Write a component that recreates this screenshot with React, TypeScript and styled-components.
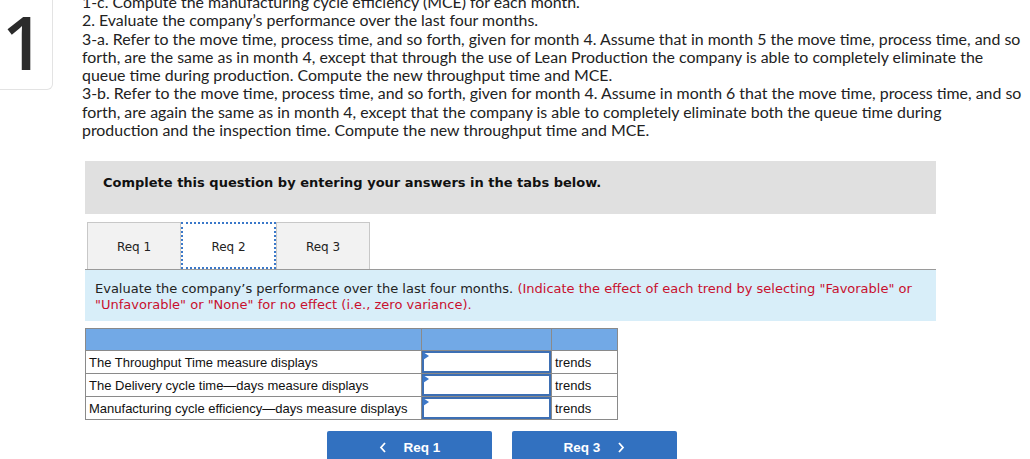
import React from "react";
import styled, { createGlobalStyle } from "styled-components";

const Global = createGlobalStyle`
  html, body { margin: 0; padding: 0; background: #fff; }
  body { overflow: hidden; }
`;

const Page = styled.div`
  display: flex;
  align-items: flex-start;
  width: 1030px;
  height: 459px;
  overflow: hidden;
`;

const NumberCard = styled.div`
  flex: 0 0 auto;
  width: 53px;
  height: 100px;
  margin-top: -10px;
  box-sizing: border-box;
  border: 1px solid #e3e3e3;
  border-left: none;
  border-radius: 0 6px 6px 0;
  display: flex;
  justify-content: flex-start;
  padding-left: 2px;
  padding-top: 14px;
  font-family: "Open Sans", sans-serif;
  font-weight: 600;
  font-size: 74px;
  line-height: 1;
  color: #2b2b2b;
  overflow: hidden;
`;

const Main = styled.div`
  flex: 1 1 auto;
  margin-left: 29px;
  display: flex;
  flex-direction: column;
`;

const Question = styled.div`
  margin-top: -7px;
  font-family: "Lato", sans-serif;
  font-size: 15.9px;
  line-height: 18.3px;
  color: #222;
  white-space: nowrap;
`;

const Line = styled.div``;

const Section = styled.div`
  margin-left: 3px;
  width: 851px;
  display: flex;
  flex-direction: column;
`;

const Instruction = styled.div`
  margin-top: 22px;
  height: 53px;
  background: #e0e0e0;
  padding: 14px 0 0 18px;
  font-family: "DejaVu Sans", Verdana, sans-serif;
  font-weight: bold;
  font-size: 13px;
  line-height: 16px;
  color: #111;
  box-sizing: border-box;
`;

const Tabs = styled.div`
  margin-top: 8px;
  display: flex;
  padding-left: 2px;
`;

const Tab = styled.div<{ $active?: boolean }>`
  width: ${(p) => (p.$active ? "95px" : "94px")};
  height: 47px;
  box-sizing: border-box;
  display: flex;
  align-items: center;
  justify-content: center;
  padding-top: 2px;
  font-family: "DejaVu Sans", Verdana, sans-serif;
  font-size: 12px;
  color: #222;
  background: ${(p) => (p.$active ? "#fff" : "#f2f2f2")};
  border: ${(p) => (p.$active ? "2px dotted #3a78c9" : "1px solid #c8c8c8")};
  border-bottom: ${(p) => (p.$active ? "2px dotted #3a78c9" : "none")};
  margin-bottom: ${(p) => (p.$active ? "-1px" : "0")};
  position: relative;
  z-index: ${(p) => (p.$active ? 1 : 0)};
`;

const InfoBox = styled.div`
  border-top: 1px solid #9a9a9a;
  background: #d8eef9;
  height: 52px;
  box-sizing: border-box;
  padding: 11px 10px 0 10px;
  font-family: "DejaVu Sans", Verdana, sans-serif;
  font-size: 13px;
  line-height: 16px;
  color: #222;
  white-space: nowrap;
`;

const Red = styled.span`
  color: #c8102e;
`;

const Table = styled.table`
  margin-top: 7px;
  width: 532px;
  table-layout: fixed;
  border-collapse: collapse;
  font-family: "Liberation Sans", Arial, sans-serif;
  font-size: 13px;
  color: #111;
`;

const HeadCell = styled.td`
  height: 22px;
  padding: 0;
  background: #72a9e6;
  border: 1px solid #8a8a8a;
  box-sizing: border-box;
`;

const Cell = styled.td`
  height: 22px;
  padding: 0 3px;
  border: 1px solid #8a8a8a;
  white-space: nowrap;
  overflow: hidden;
  box-sizing: border-box;
`;

const InputCell = styled.td`
  height: 22px;
  padding: 0;
  border: 1px solid #8a8a8a;
  box-sizing: border-box;
`;

const InputBox = styled.div`
  position: relative;
  height: 22px;
  box-sizing: border-box;
  border: 2px solid #3d6fb4;
  background: #fff;
  &::before {
    content: "";
    position: absolute;
    left: -1px;
    top: -1px;
    border-top: 4px solid transparent;
    border-bottom: 4px solid transparent;
    border-left: 6px solid #3d78c8;
  }
`;

const NavRow = styled.div`
  margin-top: 11px;
  margin-left: 242px;
  display: flex;
  gap: 20px;
`;

const NavButton = styled.button`
  width: 165px;
  height: 32px;
  border: none;
  border-radius: 2px;
  background: #3271c0;
  color: #fff;
  font-family: "Liberation Sans", Arial, sans-serif;
  font-weight: bold;
  font-size: 13.5px;
  display: flex;
  align-items: center;
  justify-content: center;
  gap: 17px;
  padding: 0;
  cursor: pointer;
`;

const Chevron = ({ dir }: { dir: "left" | "right" }) => (
  <svg width="8" height="11" viewBox="0 0 8 11" fill="none">
    <path
      d={dir === "left" ? "M6 1 L2 5.5 L6 10" : "M2 1 L6 5.5 L2 10"}
      stroke="#fff"
      strokeWidth="1.8"
    />
  </svg>
);

const rows = [
  "The Throughput Time measure displays",
  "The Delivery cycle time\u2014days measure displays",
  "Manufacturing cycle efficiency\u2014days measure displays",
];

export default function App() {
  return (
    <>
      <Global />
      <Page>
        <NumberCard>1</NumberCard>
        <Main>
          <Question>
            <Line>1-c. Compute the manufacturing cycle efficiency (MCE) for each month.</Line>
            <Line>2. Evaluate the company’s performance over the last four months.</Line>
            <Line>
              3-a. Refer to the move time, process time, and so forth, given for month 4. Assume that in month 5 the move time, process time, and so
            </Line>
            <Line>
              forth, are the same as in month 4, except that through the use of Lean Production the company is able to completely eliminate the
            </Line>
            <Line>queue time during production. Compute the new throughput time and MCE.</Line>
            <Line>
              3-b. Refer to the move time, process time, and so forth, given for month 4. Assume in month 6 that the move time, process time, and so
            </Line>
            <Line>
              forth, are again the same as in month 4, except that the company is able to completely eliminate both the queue time during
            </Line>
            <Line>production and the inspection time. Compute the new throughput time and MCE.</Line>
          </Question>
          <Section>
            <Instruction>Complete this question by entering your answers in the tabs below.</Instruction>
            <Tabs>
              <Tab>Req 1</Tab>
              <Tab $active>Req 2</Tab>
              <Tab>Req 3</Tab>
            </Tabs>
            <InfoBox>
              Evaluate the company’s performance over the last four months.{" "}
              <Red>(Indicate the effect of each trend by selecting "Favorable" or</Red>
              <br />
              <Red>"Unfavorable" or "None" for no effect (i.e., zero variance).</Red>
            </InfoBox>
            <Table>
              <colgroup>
                <col style={{ width: 336 }} />
                <col style={{ width: 130 }} />
                <col style={{ width: 66 }} />
              </colgroup>
              <tbody>
                <tr>
                  <HeadCell />
                  <HeadCell />
                  <HeadCell />
                </tr>
                {rows.map((r) => (
                  <tr key={r}>
                    <Cell>{r}</Cell>
                    <InputCell>
                      <InputBox />
                    </InputCell>
                    <Cell>trends</Cell>
                  </tr>
                ))}
              </tbody>
            </Table>
            <NavRow>
              <NavButton>
                <Chevron dir="left" />
                Req 1
              </NavButton>
              <NavButton>
                Req 3
                <Chevron dir="right" />
              </NavButton>
            </NavRow>
          </Section>
        </Main>
      </Page>
    </>
  );
}
